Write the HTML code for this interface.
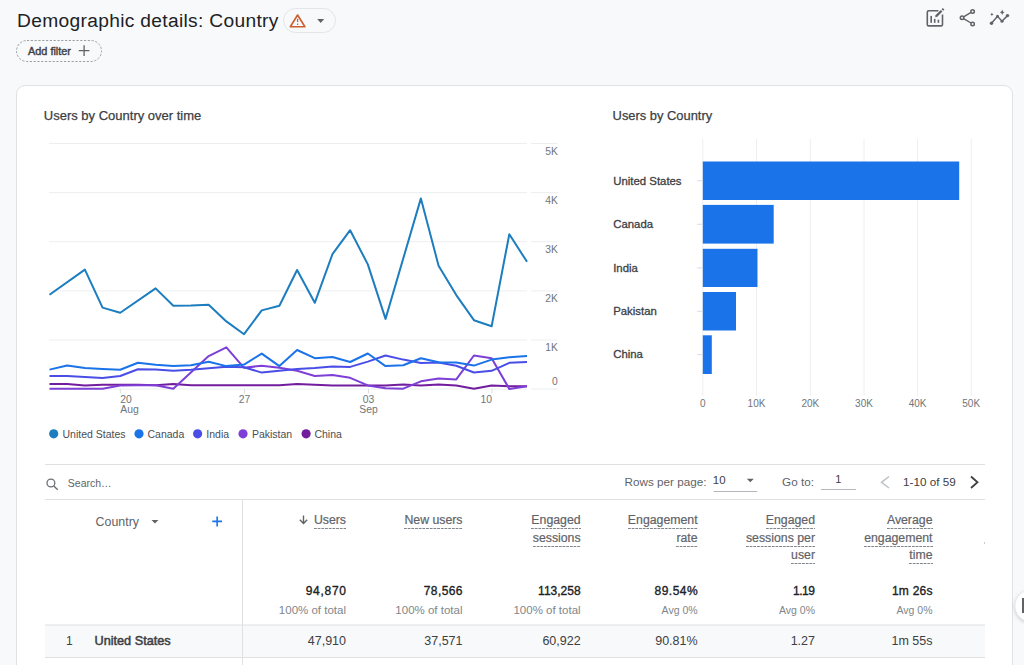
<!DOCTYPE html>
<html><head><meta charset="utf-8">
<style>
html,body{margin:0;padding:0;}
body{width:1024px;height:665px;overflow:hidden;background:#f8f9fa;position:relative;font-family:"Liberation Sans",sans-serif;color:#3c4043;}
.a{position:absolute;white-space:nowrap;line-height:1;}
.card{position:absolute;left:16px;top:85px;width:997px;height:640px;background:#fff;border:1px solid #e0e2e5;border-radius:9px;box-sizing:border-box;}
svg.full{position:absolute;left:0;top:0;}
.ul{background-image:linear-gradient(to right,#80868b 65%,transparent 65%);background-size:3.7px 1px;background-repeat:repeat-x;background-position:0 100%;padding-bottom:2px;}
</style></head>
<body>
<div style="position:absolute;left:283px;top:8px;width:53px;height:25px;border:1px solid #e3e5e8;border-radius:13px;box-sizing:border-box;"></div>
<div class="card"></div>
<svg class="full" width="1024" height="665" viewBox="0 0 1024 665">
<line x1="49" y1="143.5" x2="527" y2="143.5" stroke="#eceef0" stroke-width="1"/>
<line x1="531" y1="143.5" x2="557.5" y2="143.5" stroke="#eceef0" stroke-width="1"/>
<line x1="49" y1="192.6" x2="527" y2="192.6" stroke="#eceef0" stroke-width="1"/>
<line x1="531" y1="192.6" x2="557.5" y2="192.6" stroke="#eceef0" stroke-width="1"/>
<line x1="49" y1="241.7" x2="527" y2="241.7" stroke="#eceef0" stroke-width="1"/>
<line x1="531" y1="241.7" x2="557.5" y2="241.7" stroke="#eceef0" stroke-width="1"/>
<line x1="49" y1="290.9" x2="527" y2="290.9" stroke="#eceef0" stroke-width="1"/>
<line x1="531" y1="290.9" x2="557.5" y2="290.9" stroke="#eceef0" stroke-width="1"/>
<line x1="49" y1="340.0" x2="527" y2="340.0" stroke="#eceef0" stroke-width="1"/>
<line x1="531" y1="340.0" x2="557.5" y2="340.0" stroke="#eceef0" stroke-width="1"/>
<line x1="49" y1="389" x2="527" y2="389" stroke="#eceef0" stroke-width="1"/>
<line x1="531" y1="389" x2="557.5" y2="389" stroke="#eceef0" stroke-width="1"/>
<line x1="120.3" y1="389" x2="120.3" y2="393.5" stroke="#dadce0" stroke-width="1"/>
<line x1="244.5" y1="389" x2="244.5" y2="393.5" stroke="#dadce0" stroke-width="1"/>
<line x1="368.5" y1="389" x2="368.5" y2="393.5" stroke="#dadce0" stroke-width="1"/>
<line x1="492" y1="389" x2="492" y2="393.5" stroke="#dadce0" stroke-width="1"/>
<path d="M49.50,384.00 L67.19,384.00 L84.87,385.60 L102.56,384.80 L120.24,384.80 L137.93,384.80 L155.61,385.20 L173.30,384.00 L190.98,385.20 L208.67,385.20 L226.35,385.20 L244.04,385.20 L261.72,385.20 L279.41,385.20 L297.09,384.00 L314.78,384.80 L332.46,385.60 L350.15,385.60 L367.83,385.60 L385.52,385.60 L403.20,384.50 L420.89,385.60 L438.57,384.50 L456.26,385.60 L473.94,388.70 L491.63,385.60 L509.31,386.30 L527.00,386.30" fill="none" stroke="#721c9e" stroke-width="2" stroke-linejoin="round"/>
<path d="M49.50,388.70 L67.19,388.70 L84.87,388.70 L102.56,388.70 L120.24,385.40 L137.93,385.20 L155.61,385.20 L173.30,388.70 L208.67,356.10 L226.35,347.30 L244.04,367.80 L261.72,365.70 L279.41,367.80 L297.09,370.80 L314.78,376.00 L332.46,374.90 L350.15,377.80 L367.83,385.40 L385.52,388.30 L403.20,388.70 L420.89,381.30 L438.57,378.60 L456.26,379.40 L473.94,355.50 L491.63,358.20 L509.31,388.90 L527.00,386.30" fill="none" stroke="#7d3fd6" stroke-width="2" stroke-linejoin="round"/>
<path d="M49.50,376.00 L67.19,376.00 L84.87,377.00 L102.56,378.00 L120.24,376.00 L137.93,369.20 L155.61,369.60 L173.30,370.80 L190.98,369.80 L208.67,368.20 L226.35,366.70 L244.04,367.20 L261.72,372.60 L279.41,370.80 L297.09,369.00 L314.78,368.00 L332.46,366.40 L350.15,366.90 L367.83,361.60 L385.52,355.50 L403.20,359.60 L420.89,363.10 L438.57,362.50 L456.26,365.70 L473.94,372.50 L491.63,370.80 L509.31,362.80 L527.00,362.00" fill="none" stroke="#4a4ee6" stroke-width="2" stroke-linejoin="round"/>
<path d="M49.50,369.60 L67.19,365.50 L84.87,368.10 L102.56,369.00 L120.24,369.80 L137.93,362.80 L155.61,364.80 L173.30,366.10 L190.98,365.20 L208.67,361.70 L226.35,366.10 L244.04,364.60 L261.72,353.60 L279.41,366.10 L297.09,350.00 L314.78,358.20 L332.46,357.00 L350.15,362.00 L367.83,353.50 L385.52,366.10 L403.20,365.20 L420.89,358.20 L438.57,362.20 L456.26,362.50 L473.94,365.60 L491.63,359.60 L509.31,357.30 L527.00,355.90" fill="none" stroke="#1a73e8" stroke-width="2" stroke-linejoin="round"/>
<path d="M49.50,294.70 L84.87,269.60 L102.56,307.60 L120.24,312.80 L155.61,288.40 L173.30,305.80 L190.98,305.50 L208.67,304.80 L226.35,321.40 L244.04,334.20 L261.72,310.40 L279.41,305.80 L297.09,270.00 L314.78,302.80 L332.46,254.20 L350.15,230.20 L367.83,264.40 L385.52,318.90 L420.89,198.40 L438.57,265.70 L456.26,295.10 L473.94,320.20 L491.63,326.30 L509.31,234.20 L527.00,261.80" fill="none" stroke="#1c7dbf" stroke-width="2" stroke-linejoin="round"/>
<line x1="702.8" y1="139" x2="702.8" y2="396" stroke="#eceef0" stroke-width="1"/>
<line x1="756.5" y1="139" x2="756.5" y2="396" stroke="#eceef0" stroke-width="1"/>
<line x1="810.3" y1="139" x2="810.3" y2="396" stroke="#eceef0" stroke-width="1"/>
<line x1="864.0" y1="139" x2="864.0" y2="396" stroke="#eceef0" stroke-width="1"/>
<line x1="917.6" y1="139" x2="917.6" y2="396" stroke="#eceef0" stroke-width="1"/>
<line x1="971.2" y1="139" x2="971.2" y2="396" stroke="#eceef0" stroke-width="1"/>
<rect x="702.8" y="161.5" width="256.40" height="38.50" fill="#1a73e8"/>
<line x1="697" y1="180.75" x2="702.5" y2="180.75" stroke="#dadce0" stroke-width="1"/>
<rect x="702.8" y="204.9" width="70.90" height="38.70" fill="#1a73e8"/>
<line x1="697" y1="224.25" x2="702.5" y2="224.25" stroke="#dadce0" stroke-width="1"/>
<rect x="702.8" y="248.8" width="54.70" height="38.20" fill="#1a73e8"/>
<line x1="697" y1="267.9" x2="702.5" y2="267.9" stroke="#dadce0" stroke-width="1"/>
<rect x="702.8" y="292" width="33.20" height="38.50" fill="#1a73e8"/>
<line x1="697" y1="311.25" x2="702.5" y2="311.25" stroke="#dadce0" stroke-width="1"/>
<rect x="702.8" y="335.3" width="9.00" height="38.70" fill="#1a73e8"/>
<line x1="697" y1="354.65" x2="702.5" y2="354.65" stroke="#dadce0" stroke-width="1"/>
<circle cx="53.7" cy="433.8" r="4.6" fill="#1c7dbf"/>
<circle cx="139" cy="433.8" r="4.6" fill="#1a73e8"/>
<circle cx="197.6" cy="433.8" r="4.6" fill="#4a4ee6"/>
<circle cx="243" cy="433.8" r="4.6" fill="#7d3fd6"/>
<circle cx="306.1" cy="433.8" r="4.6" fill="#721c9e"/>
<line x1="45" y1="464.5" x2="985" y2="464.5" stroke="#e0e0e0" stroke-width="1"/>
<line x1="45" y1="499.5" x2="985" y2="499.5" stroke="#e0e0e0" stroke-width="1"/>
<rect x="45" y="625" width="940" height="32.5" fill="#f8f9fa"/>
<line x1="45" y1="625" x2="985" y2="625" stroke="#e0e0e0" stroke-width="1"/>
<line x1="45" y1="657.5" x2="985" y2="657.5" stroke="#e0e0e0" stroke-width="1"/>
<line x1="242.5" y1="500" x2="242.5" y2="665" stroke="#e0e0e0" stroke-width="1"/>
<circle cx="50.9" cy="483" r="3.9" fill="none" stroke="#6b6f74" stroke-width="1.3"/>
<line x1="53.8" y1="485.9" x2="57.7" y2="489.8" stroke="#6b6f74" stroke-width="1.4"/>
<path d="M151.5,519.9 L158.4,519.9 L154.95,523.4 Z" fill="#5f6368"/>
<path d="M212.3,521.4 H222 M217.15,516.6 V526.4" stroke="#1a73e8" stroke-width="1.6"/>
<path d="M303.5,515.5 V523.5 M299.8,519.8 L303.5,523.5 L307.2,519.8" fill="none" stroke="#5f6368" stroke-width="1.4"/>
<path d="M746.8,478.7 L753.8,478.7 L750.3,482.3 Z" fill="#5f6368"/>
<line x1="713.5" y1="491.5" x2="757" y2="491.5" stroke="#b4b8bc" stroke-width="1"/>
<line x1="821" y1="489.5" x2="856" y2="489.5" stroke="#b4b8bc" stroke-width="1"/>
<path d="M889,476.5 L881.5,482.3 L889,488" fill="none" stroke="#bdc1c6" stroke-width="1.5"/>
<path d="M971,476.5 L977.5,482.3 L971,488" fill="none" stroke="#3c4043" stroke-width="1.8"/>
<path d="M297.6,15.0 L304.9,26.75 L290.3,26.75 Z" fill="none" stroke="#cc5f2d" stroke-width="1.6" stroke-linejoin="round"/>
<line x1="297.6" y1="18.8" x2="297.6" y2="22.1" stroke="#cc5f2d" stroke-width="1.3"/>
<rect x="296.95" y="23.6" width="1.3" height="1.3" fill="#cc5f2d"/>
<path d="M317.2,18.9 L324.2,18.9 L320.7,22.9 Z" fill="#5f6368"/>
<rect x="16.5" y="40.5" width="85" height="21" rx="10.5" fill="none" stroke="#9aa0a6" stroke-width="1" stroke-dasharray="2.2 1.6"/>
<path d="M78.8,50.6 H89.4 M84.1,45.3 V55.9" stroke="#5f6368" stroke-width="1.3"/>
<path d="M938.4,10.7 H928.8 Q927.3,10.7 927.3,12.2 V24.4 Q927.3,25.9 928.8,25.9 H941 Q942.5,25.9 942.5,24.4 V14.4" fill="none" stroke="#5f6368" stroke-width="1.6"/>
<path d="M936.0,16.4 L941.6,10.8" stroke="#5f6368" stroke-width="2.3"/>
<path d="M935.2,17.3 L935.6,15.6 L936.9,16.9 Z" fill="#5f6368"/>
<path d="M942.4,10.0 L943.6,8.8" stroke="#5f6368" stroke-width="2.3"/>
<rect x="930.4" y="15.9" width="1.6" height="6.9" fill="#5f6368"/>
<rect x="933.9" y="18.9" width="1.6" height="3.9" fill="#5f6368"/>
<rect x="937.6" y="19.7" width="1.6" height="3.1" fill="#5f6368"/>
<circle cx="972.6" cy="11.45" r="1.75" fill="none" stroke="#5f6368" stroke-width="1.5"/>
<circle cx="962.04" cy="17.7" r="1.75" fill="none" stroke="#5f6368" stroke-width="1.5"/>
<circle cx="972.6" cy="23.96" r="1.75" fill="none" stroke="#5f6368" stroke-width="1.5"/>
<path d="M963.6,16.8 L971.0,12.4 M963.6,18.6 L971.0,23.0" stroke="#5f6368" stroke-width="1.4"/>
<path d="M991.5,23.2 L997.5,16.3 L1002,21.2 L1007.5,15.6" fill="none" stroke="#5f6368" stroke-width="1.5"/>
<circle cx="991.5" cy="23.2" r="1.7" fill="#5f6368"/>
<circle cx="997.5" cy="16.3" r="1.5" fill="#5f6368"/>
<circle cx="1002" cy="21.2" r="1.5" fill="#5f6368"/>
<circle cx="1007.5" cy="15.6" r="1.7" fill="#5f6368"/>
<path d="M1002.2,9.4 Q1002.6,11.8 1004.5,12.2 Q1002.6,12.6 1002.2,15.0 Q1001.8,12.6 999.9,12.2 Q1001.8,11.8 1002.2,9.4 Z" fill="#5f6368"/>
<path d="M991.9,12.8 Q992.2,14.1 993.5,14.4 Q992.2,14.7 991.9,16.0 Q991.6,14.7 990.3,14.4 Q991.6,14.1 991.9,12.8 Z" fill="#5f6368"/>
<rect x="984" y="542" width="1" height="2" fill="#c8cacd"/>
<defs><filter id="sh" x="-50%" y="-50%" width="200%" height="200%"><feDropShadow dx="0" dy="1" stdDeviation="2" flood-color="#000" flood-opacity="0.25"/></filter></defs>
<circle cx="1031" cy="606" r="15.5" fill="#fff" filter="url(#sh)"/>
<rect x="1022" y="598" width="3" height="15" fill="#5f6368"/>
</svg>
<div class="a" style="left:17px;top:10.65px;font-size:19.2px;color:#202124;font-weight:400;letter-spacing:0.32px;">Demographic details: Country</div>
<div class="a" style="left:28px;top:45.97px;font-size:10.9px;color:#3c4043;font-weight:400;letter-spacing:0px;-webkit-text-stroke:0.4px #3c4043;">Add filter</div>
<div class="a" style="left:43.8px;top:108.80px;font-size:13.0px;color:#3c4043;font-weight:400;letter-spacing:0px;-webkit-text-stroke:0.25px #3c4043;">Users by Country over time</div>
<div class="a" style="left:612.6px;top:109.88px;font-size:12.9px;color:#3c4043;font-weight:400;letter-spacing:0px;-webkit-text-stroke:0.25px #3c4043;">Users by Country</div>
<div class="a" style="right:466.20000000000005px;top:146.68px;font-size:10.3px;color:#70757a;font-weight:400;letter-spacing:0px;">5K</div>
<div class="a" style="right:466.20000000000005px;top:195.68px;font-size:10.3px;color:#70757a;font-weight:400;letter-spacing:0px;">4K</div>
<div class="a" style="right:466.20000000000005px;top:244.78px;font-size:10.3px;color:#70757a;font-weight:400;letter-spacing:0px;">3K</div>
<div class="a" style="right:466.20000000000005px;top:293.98px;font-size:10.3px;color:#70757a;font-weight:400;letter-spacing:0px;">2K</div>
<div class="a" style="right:466.20000000000005px;top:342.58px;font-size:10.3px;color:#70757a;font-weight:400;letter-spacing:0px;">1K</div>
<div class="a" style="right:466.20000000000005px;top:377.18px;font-size:10.3px;color:#70757a;font-weight:400;letter-spacing:0px;">0</div>
<div class="a" style="left:120.3px;top:394.60px;font-size:10.4px;color:#70757a;font-weight:400;letter-spacing:0px;">20</div>
<div class="a" style="left:120.3px;top:405.20px;font-size:10.4px;color:#70757a;font-weight:400;letter-spacing:0px;">Aug</div>
<div class="a" style="left:244.5px;transform:translateX(-50%);top:394.60px;font-size:10.4px;color:#70757a;font-weight:400;letter-spacing:0px;">27</div>
<div class="a" style="left:368.5px;transform:translateX(-50%);top:394.60px;font-size:10.4px;color:#70757a;font-weight:400;letter-spacing:0px;">03</div>
<div class="a" style="left:368.5px;transform:translateX(-50%);top:405.20px;font-size:10.4px;color:#70757a;font-weight:400;letter-spacing:0px;">Sep</div>
<div class="a" style="right:532px;top:394.60px;font-size:10.4px;color:#70757a;font-weight:400;letter-spacing:0px;">10</div>
<div class="a" style="left:62.5px;top:429.11px;font-size:10.5px;color:#4a4e53;font-weight:400;letter-spacing:0px;">United States</div>
<div class="a" style="left:147.5px;top:429.11px;font-size:10.5px;color:#4a4e53;font-weight:400;letter-spacing:0px;">Canada</div>
<div class="a" style="left:206.3px;top:429.11px;font-size:10.5px;color:#4a4e53;font-weight:400;letter-spacing:0px;">India</div>
<div class="a" style="left:251.9px;top:429.11px;font-size:10.5px;color:#4a4e53;font-weight:400;letter-spacing:0px;">Pakistan</div>
<div class="a" style="left:314.4px;top:429.11px;font-size:10.5px;color:#4a4e53;font-weight:400;letter-spacing:0px;">China</div>
<div class="a" style="left:613.2px;top:175.65px;font-size:11.4px;color:#3c4043;font-weight:400;letter-spacing:0px;-webkit-text-stroke:0.3px #3c4043;">United States</div>
<div class="a" style="left:613.2px;top:218.95px;font-size:11.4px;color:#3c4043;font-weight:400;letter-spacing:0px;-webkit-text-stroke:0.3px #3c4043;">Canada</div>
<div class="a" style="left:613.2px;top:262.55px;font-size:11.4px;color:#3c4043;font-weight:400;letter-spacing:0px;-webkit-text-stroke:0.3px #3c4043;">India</div>
<div class="a" style="left:613.2px;top:305.95px;font-size:11.4px;color:#3c4043;font-weight:400;letter-spacing:0px;-webkit-text-stroke:0.3px #3c4043;">Pakistan</div>
<div class="a" style="left:613.2px;top:349.35px;font-size:11.4px;color:#3c4043;font-weight:400;letter-spacing:0px;-webkit-text-stroke:0.3px #3c4043;">China</div>
<div class="a" style="left:702.8px;transform:translateX(-50%);top:398.54px;font-size:10px;color:#70757a;font-weight:400;letter-spacing:0px;">0</div>
<div class="a" style="left:756.5px;transform:translateX(-50%);top:398.54px;font-size:10px;color:#70757a;font-weight:400;letter-spacing:0px;">10K</div>
<div class="a" style="left:810.3px;transform:translateX(-50%);top:398.54px;font-size:10px;color:#70757a;font-weight:400;letter-spacing:0px;">20K</div>
<div class="a" style="left:864px;transform:translateX(-50%);top:398.54px;font-size:10px;color:#70757a;font-weight:400;letter-spacing:0px;">30K</div>
<div class="a" style="left:917.6px;transform:translateX(-50%);top:398.54px;font-size:10px;color:#70757a;font-weight:400;letter-spacing:0px;">40K</div>
<div class="a" style="left:971.2px;transform:translateX(-50%);top:398.54px;font-size:10px;color:#70757a;font-weight:400;letter-spacing:0px;">50K</div>
<div class="a" style="left:67.8px;top:478.21px;font-size:10.5px;color:#5f6368;font-weight:400;letter-spacing:0px;">Search…</div>
<div class="a" style="left:624.6px;top:475.60px;font-size:11.7px;color:#5f6368;font-weight:400;letter-spacing:0px;">Rows per page:</div>
<div class="a" style="left:712.8px;top:474.65px;font-size:11.4px;color:#3c4043;font-weight:400;letter-spacing:0px;">10</div>
<div class="a" style="left:782.1px;top:476.40px;font-size:11.7px;color:#5f6368;font-weight:400;letter-spacing:0px;">Go to:</div>
<div class="a" style="left:838.3px;transform:translateX(-50%);top:474.09px;font-size:11.0px;color:#3c4043;font-weight:400;letter-spacing:0px;">1</div>
<div class="a" style="left:903.1px;top:476.40px;font-size:11.7px;color:#3c4043;font-weight:400;letter-spacing:0px;">1-10 of 59</div>
<div class="a" style="left:95.6px;top:515.70px;font-size:12.4px;color:#5f6368;font-weight:400;letter-spacing:0px;">Country</div>
<div class="a" style="right:678px;top:514.29px;font-size:12.3px;color:#5f6368;font-weight:400;letter-spacing:0px;-webkit-text-stroke:0.2px #5f6368;"><span class="ul">Users</span></div>
<div class="a" style="right:561.5px;top:514.29px;font-size:12.3px;color:#5f6368;font-weight:400;letter-spacing:0px;-webkit-text-stroke:0.2px #5f6368;"><span class="ul">New users</span></div>
<div class="a" style="right:443.4px;top:514.29px;font-size:12.3px;color:#5f6368;font-weight:400;letter-spacing:0px;-webkit-text-stroke:0.2px #5f6368;"><span class="ul">Engaged</span></div>
<div class="a" style="right:443.4px;top:531.69px;font-size:12.3px;color:#5f6368;font-weight:400;letter-spacing:0px;-webkit-text-stroke:0.2px #5f6368;"><span class="ul">sessions</span></div>
<div class="a" style="right:326.4px;top:514.29px;font-size:12.3px;color:#5f6368;font-weight:400;letter-spacing:0px;-webkit-text-stroke:0.2px #5f6368;"><span class="ul">Engagement</span></div>
<div class="a" style="right:326.4px;top:531.69px;font-size:12.3px;color:#5f6368;font-weight:400;letter-spacing:0px;-webkit-text-stroke:0.2px #5f6368;"><span class="ul">rate</span></div>
<div class="a" style="right:209px;top:514.29px;font-size:12.3px;color:#5f6368;font-weight:400;letter-spacing:0px;-webkit-text-stroke:0.2px #5f6368;"><span class="ul">Engaged</span></div>
<div class="a" style="right:209px;top:531.69px;font-size:12.3px;color:#5f6368;font-weight:400;letter-spacing:0px;-webkit-text-stroke:0.2px #5f6368;"><span class="ul">sessions per</span></div>
<div class="a" style="right:209px;top:549.09px;font-size:12.3px;color:#5f6368;font-weight:400;letter-spacing:0px;-webkit-text-stroke:0.2px #5f6368;"><span class="ul">user</span></div>
<div class="a" style="right:91.5px;top:514.29px;font-size:12.3px;color:#5f6368;font-weight:400;letter-spacing:0px;-webkit-text-stroke:0.2px #5f6368;"><span class="ul">Average</span></div>
<div class="a" style="right:91.5px;top:531.69px;font-size:12.3px;color:#5f6368;font-weight:400;letter-spacing:0px;-webkit-text-stroke:0.2px #5f6368;"><span class="ul">engagement</span></div>
<div class="a" style="right:91.5px;top:549.09px;font-size:12.3px;color:#5f6368;font-weight:400;letter-spacing:0px;-webkit-text-stroke:0.2px #5f6368;"><span class="ul">time</span></div>
<div class="a" style="right:677.28px;top:585.34px;font-size:12.0px;color:#202124;font-weight:400;letter-spacing:0.72px;-webkit-text-stroke:0.35px #202124;">94,870</div>
<div class="a" style="right:678px;top:605.07px;font-size:11.5px;color:#80868b;font-weight:400;letter-spacing:0px;">100% of total</div>
<div class="a" style="right:678px;top:634.92px;font-size:12.5px;color:#3c4043;font-weight:400;letter-spacing:0px;">47,910</div>
<div class="a" style="right:561.1px;top:585.34px;font-size:12.0px;color:#202124;font-weight:400;letter-spacing:0.4px;-webkit-text-stroke:0.35px #202124;">78,566</div>
<div class="a" style="right:561.5px;top:605.07px;font-size:11.5px;color:#80868b;font-weight:400;letter-spacing:0px;">100% of total</div>
<div class="a" style="right:561.5px;top:634.92px;font-size:12.5px;color:#3c4043;font-weight:400;letter-spacing:0px;">37,571</div>
<div class="a" style="right:443.4px;top:585.34px;font-size:12.0px;color:#202124;font-weight:400;letter-spacing:0.0px;-webkit-text-stroke:0.35px #202124;">113,258</div>
<div class="a" style="right:443.4px;top:605.07px;font-size:11.5px;color:#80868b;font-weight:400;letter-spacing:0px;">100% of total</div>
<div class="a" style="right:443.4px;top:634.92px;font-size:12.5px;color:#3c4043;font-weight:400;letter-spacing:0px;">60,922</div>
<div class="a" style="right:325.93999999999994px;top:585.34px;font-size:12.0px;color:#202124;font-weight:400;letter-spacing:0.46px;-webkit-text-stroke:0.35px #202124;">89.54%</div>
<div class="a" style="right:326.4px;top:605.41px;font-size:10.5px;color:#80868b;font-weight:400;letter-spacing:0px;">Avg 0%</div>
<div class="a" style="right:326.4px;top:634.92px;font-size:12.5px;color:#3c4043;font-weight:400;letter-spacing:0px;">90.81%</div>
<div class="a" style="right:209.45000000000005px;top:585.34px;font-size:12.0px;color:#202124;font-weight:400;letter-spacing:-0.45px;-webkit-text-stroke:0.35px #202124;">1.19</div>
<div class="a" style="right:209px;top:605.41px;font-size:10.5px;color:#80868b;font-weight:400;letter-spacing:0px;">Avg 0%</div>
<div class="a" style="right:209px;top:634.92px;font-size:12.5px;color:#3c4043;font-weight:400;letter-spacing:0px;">1.27</div>
<div class="a" style="right:91.25999999999999px;top:585.34px;font-size:12.0px;color:#202124;font-weight:400;letter-spacing:0.24px;-webkit-text-stroke:0.35px #202124;">1m 26s</div>
<div class="a" style="right:91.5px;top:605.41px;font-size:10.5px;color:#80868b;font-weight:400;letter-spacing:0px;">Avg 0%</div>
<div class="a" style="right:91.5px;top:634.92px;font-size:12.5px;color:#3c4043;font-weight:400;letter-spacing:0px;">1m 55s</div>
<div class="a" style="left:69.3px;transform:translateX(-50%);top:635.14px;font-size:12.0px;color:#3c4043;font-weight:400;letter-spacing:0px;">1</div>
<div class="a" style="left:94.5px;top:634.75px;font-size:12.7px;color:#3c4043;font-weight:400;letter-spacing:0px;-webkit-text-stroke:0.5px #3c4043;">United States</div>
</body></html>
